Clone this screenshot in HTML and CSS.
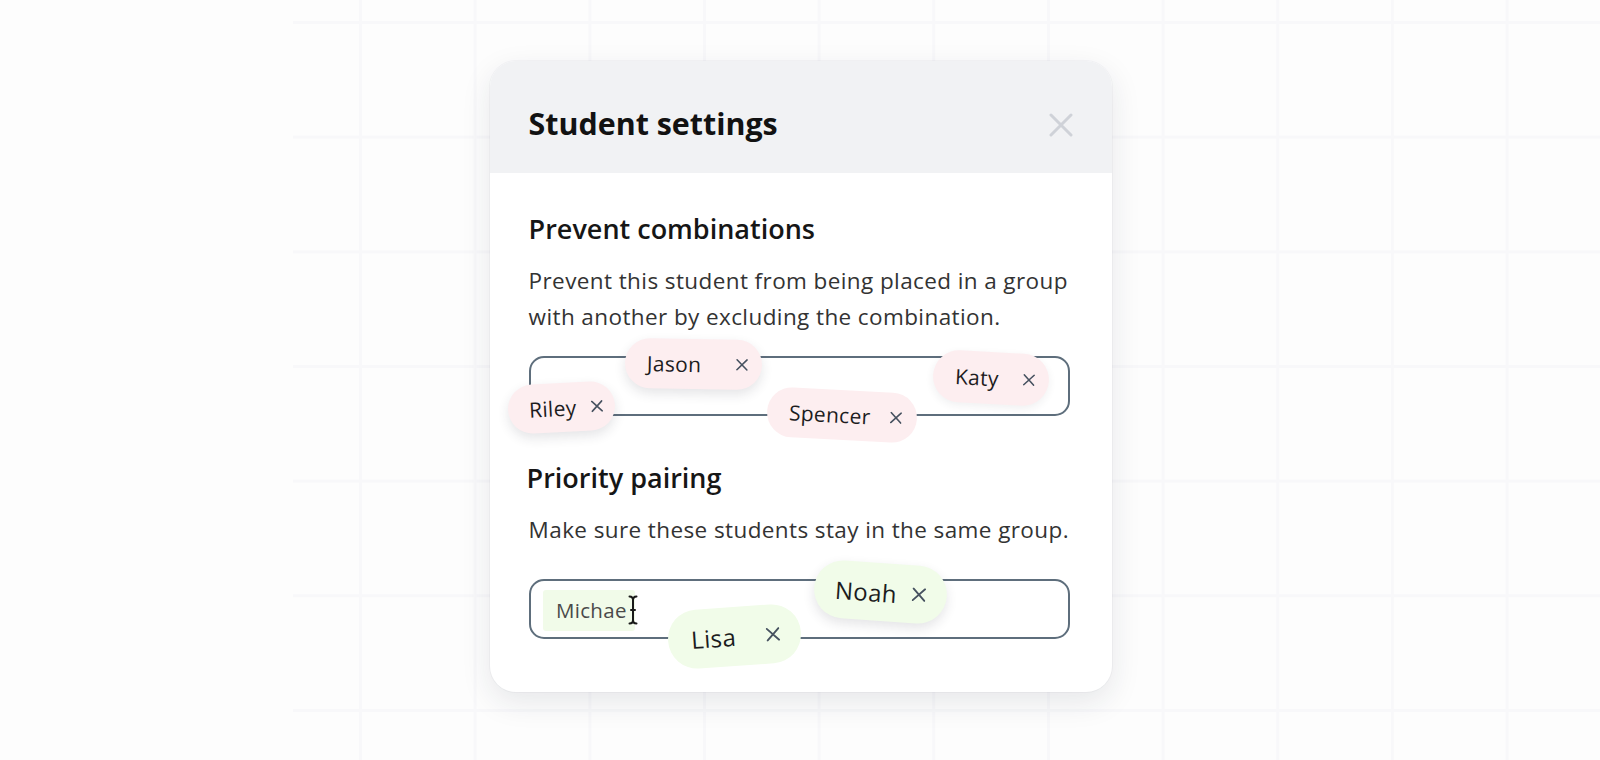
FILE: index.html
```html
<!DOCTYPE html>
<html lang="en">
<head>
<meta charset="utf-8">
<title>Student settings</title>
<link rel="stylesheet" href="styles.css">
</head>
<body>
<main class="stage">
  <section class="card">
    <header class="card-head">
      <h1 class="title">Student settings</h1>
      <button class="close" type="button" aria-label="Close">
        <svg width="24" height="24" viewBox="0 0 24 24"><path d="M2 2 L22 22 M22 2 L2 22" fill="none" stroke="#cfd2d8" stroke-width="3" stroke-linecap="round"/></svg>
      </button>
    </header>
    <div class="card-body">
      <h2 class="sec-title">Prevent combinations</h2>
      <p class="sec-text">Prevent this student from being placed in a group<br>with another by excluding the combination.</p>
      <div class="field field-prevent">
        <span class="chip chip-pink chip-shadow chip-jason">Jason<svg class="x" viewBox="0 0 12 12"><path d="M1 1 L11 11 M11 1 L1 11"/></svg></span>
        <span class="chip chip-pink chip-shadow-soft chip-katy">Katy<svg class="x" viewBox="0 0 12 12"><path d="M1 1 L11 11 M11 1 L1 11"/></svg></span>
        <span class="chip chip-pink chip-spencer">Spencer<svg class="x" viewBox="0 0 12 12"><path d="M1 1 L11 11 M11 1 L1 11"/></svg></span>
        <span class="chip chip-pink chip-shadow chip-riley">Riley<svg class="x" viewBox="0 0 12 12"><path d="M1 1 L11 11 M11 1 L1 11"/></svg></span>
      </div>
      <h2 class="sec-title sec-title-2">Priority pairing</h2>
      <p class="sec-text sec-text-2">Make sure these students stay in the same group.</p>
      <div class="field field-pair">
        <span class="typed">Michae<svg class="ibeam" viewBox="0 0 10 30"><path d="M1.5 1.5 Q5 1.5 5 5 L5 25 Q5 28.5 1.5 28.5 M8.5 1.5 Q5 1.5 5 5 M5 25 Q5 28.5 8.5 28.5 M3 15 L7 15"/></svg></span>
        <span class="chip chip-green chip-big chip-lisa">Lisa<svg class="x" viewBox="0 0 12 12"><path d="M1 1 L11 11 M11 1 L1 11"/></svg></span>
        <span class="chip chip-green chip-big chip-shadow chip-noah">Noah<svg class="x" viewBox="0 0 12 12"><path d="M1 1 L11 11 M11 1 L1 11"/></svg></span>
      </div>
    </div>
  </section>
</main>
</body>
</html>
```
FILE: styles.css
```css
html, body {
  margin: 0;
  height: 100%;
}

body {
  font-family: "Open Sans", "Noto Sans", sans-serif;
  background-color: #fdfdfd;
  background-image:
    linear-gradient(#fdfdfd, #fdfdfd),
    linear-gradient(to right, #f8f8fa 0, #f8f8fa 3px, transparent 3px),
    linear-gradient(to bottom, #f8f8fa 0, #f8f8fa 3px, transparent 3px);
  background-size: 293px 100%, 114.67px 100%, 100% 114.67px;
  background-position: 0 0, 359px 0, 0 21px;
  background-repeat: no-repeat, repeat, repeat;
  overflow: hidden;
}

.stage {
  padding: 61px 0 0 490px;
}

.card {
  width: 622px;
  background: #ffffff;
  border-radius: 26px;
  overflow: hidden;
  box-shadow: 0 0 0 1px rgba(30, 40, 60, 0.03), 0 10px 30px rgba(30, 40, 60, 0.10);
}

.card-head {
  height: 112px;
  box-sizing: border-box;
  background: #f1f2f4;
  padding: 43px 39px 0 38.6px;
  display: flex;
  justify-content: space-between;
  align-items: flex-start;
}

.title {
  margin: 0;
  font-size: 30.4px;
  line-height: 40px;
  font-weight: 700;
  color: #121212;
}

.close {
  margin-top: 8.5px;
  padding: 0;
  border: 0;
  background: none;
  width: 24px;
  height: 24px;
  display: block;
}

.close svg {
  display: block;
}

.card-body {
  padding: 38.5px 42px 53.4px 38.6px;
}

.sec-title {
  margin: 0;
  font-size: 27px;
  line-height: 34px;
  font-weight: 600;
  color: #161616;
}

.sec-title-2 {
  margin-top: 44.8px;
  margin-left: -2px;
}

.sec-text {
  margin: 17.7px 0 0;
  font-size: 22.5px;
  font-weight: 400;
  letter-spacing: 0.4px;
  line-height: 35.7px;
  color: #333333;
  white-space: nowrap;
}

.sec-text-2 {
  margin-top: 17px;
}

.field {
  position: relative;
  width: 541px;
  height: 60px;
  box-sizing: border-box;
  border: 2px solid #5e6e7c;
  border-radius: 15px;
}

.field-prevent {
  margin-top: 21.4px;
}

.field-pair {
  margin-top: 31.1px;
}

.chip {
  position: absolute;
  display: flex;
  align-items: center;
  justify-content: space-between;
  box-sizing: border-box;
  height: 50px;
  border-radius: 25px;
  padding: 0 14px 0 20px;
  font-size: 21px;
  letter-spacing: 0.3px;
  color: #1c1c1e;
  white-space: nowrap;
}

.chip .x {
  width: 12px;
  height: 12px;
  flex: none;
  fill: none;
  stroke: #475260;
  stroke-width: 1.6;
  stroke-linecap: round;
}

.chip-pink {
  background: #fdeef0;
}

.chip-green {
  background: #f1fce9;
}

.chip-shadow {
  box-shadow: 0 5px 12px rgba(40, 40, 60, 0.12);
}

.chip-shadow-soft {
  box-shadow: 0 3px 8px rgba(40, 40, 60, 0.07);
}

.chip-jason {
  left: 94.3px;
  top: -19.2px;
  width: 137px;
  padding-left: 22px;
  transform: rotate(1deg);
}

.chip-katy {
  left: 402.8px;
  top: -5.5px;
  width: 116px;
  height: 52px;
  border-radius: 26px;
  padding-left: 22px;
  transform: rotate(3deg);
}

.chip-riley {
  left: -22.5px;
  top: 24.7px;
  width: 107px;
  height: 49px;
  border-radius: 24.5px;
  padding-left: 21px;
  padding-right: 12px;
  transform: rotate(-3deg);
}

.chip-spencer {
  left: 236.2px;
  top: 32.4px;
  width: 150px;
  padding-left: 22px;
  padding-right: 15px;
  transform: rotate(3deg);
}

.chip-big {
  height: 58px;
  border-radius: 29px;
  font-size: 24px;
  letter-spacing: 0.4px;
  padding: 0 21px 0 21px;
}

.chip-big .x {
  width: 14px;
  height: 14px;
}

.chip-noah {
  left: 283.4px;
  top: -17.2px;
  width: 133px;
  transform: rotate(4deg);
}

.chip-lisa {
  left: 137.6px;
  top: 26.1px;
  width: 133px;
  height: 59px;
  padding-left: 23px;
  transform: rotate(-4deg);
}

.typed {
  position: absolute;
  left: 12.4px;
  top: 9.2px;
  width: 91.8px;
  height: 40.8px;
  box-sizing: border-box;
  padding-left: 13px;
  background: #f1fbe9;
  border-radius: 3px;
  display: flex;
  align-items: center;
  font-size: 20.5px;
  font-weight: 400;
  letter-spacing: 0.3px;
  color: #4a4a4a;
}

.ibeam {
  position: absolute;
  left: 84.6px;
  top: 5px;
  width: 10px;
  height: 30px;
  fill: none;
  stroke: #1a1a1a;
  stroke-width: 2;
  stroke-linecap: round;
}
```
